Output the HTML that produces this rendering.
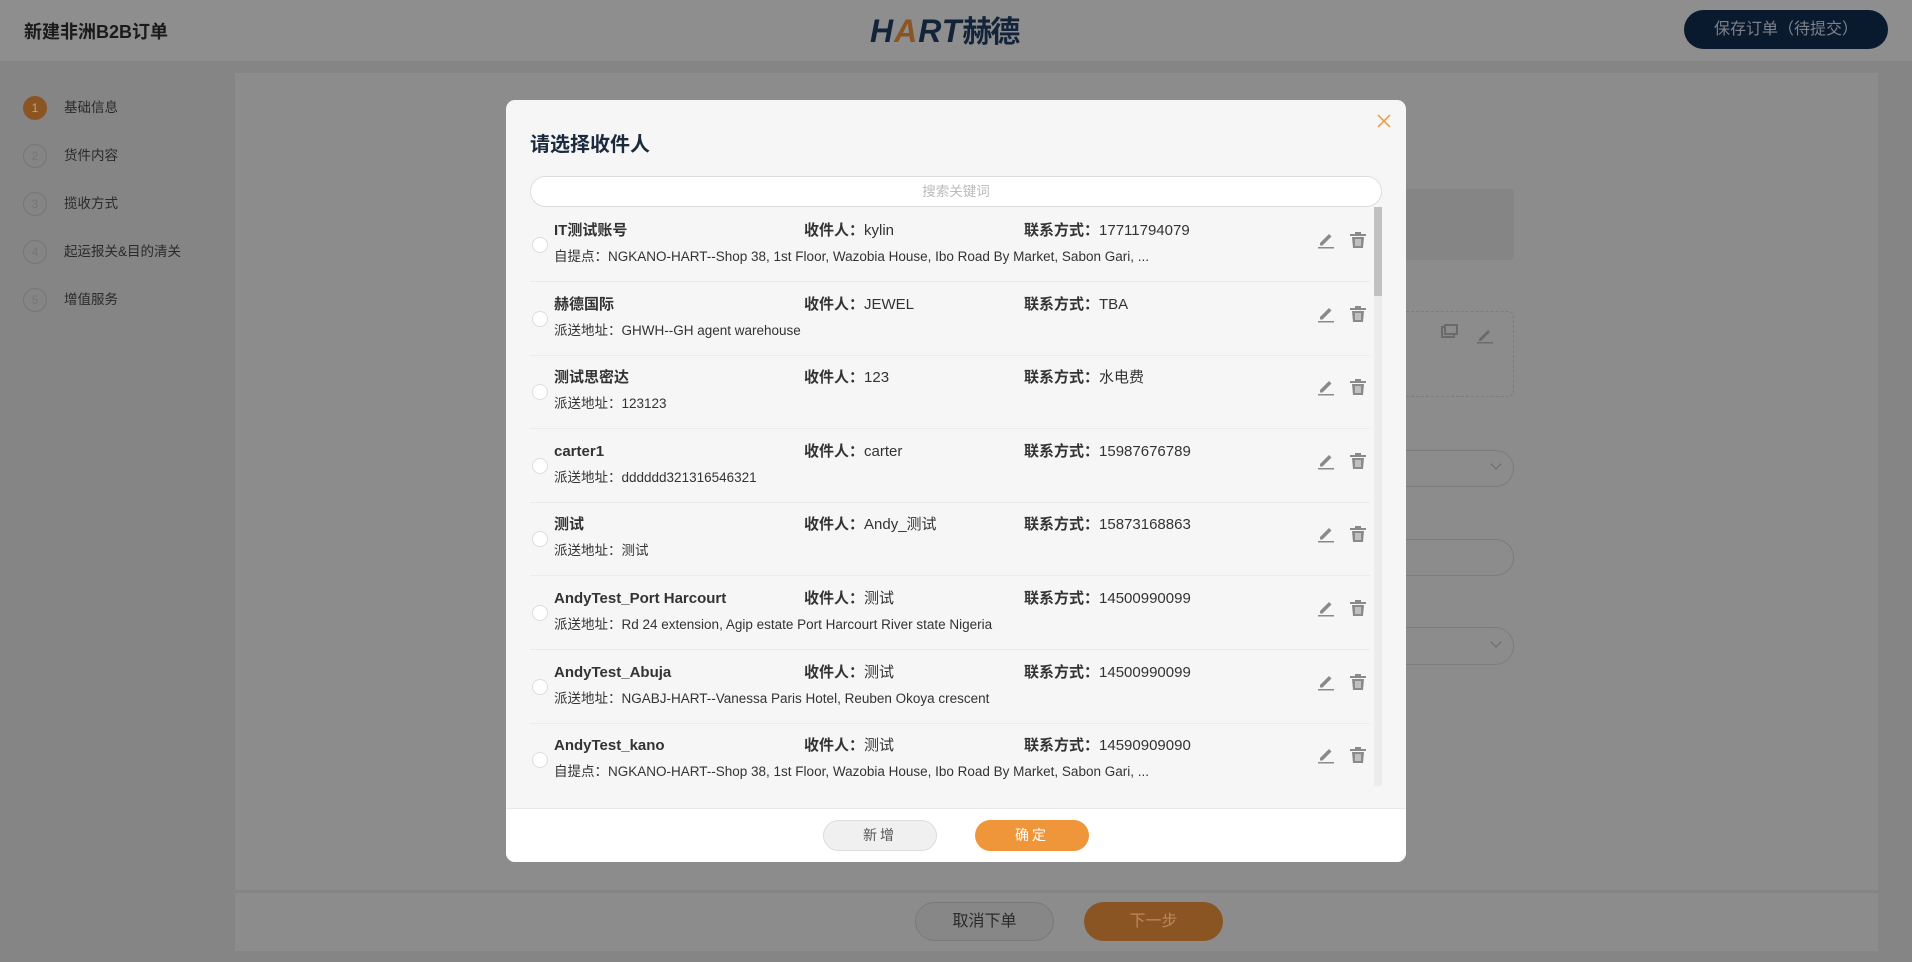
<!DOCTYPE html>
<html><head><meta charset="utf-8"><style>
*{box-sizing:border-box;margin:0;padding:0}
body{width:1912px;height:962px;overflow:hidden;background:#858585;font-family:"Liberation Sans","Noto Sans CJK SC",sans-serif;position:relative;color:#222}
.abs{position:absolute}
.hdr{left:0;top:0;width:1912px;height:61px;background:#8e8e8e}
.panel{left:235px;top:73px;width:1643px;height:878px;background:#8c8c8c}
.step{left:23px;width:24px;height:24px;border-radius:50%;border:1px solid #767676;color:#767676;font-size:12px;text-align:center;line-height:22px}
.stxt{left:64px;font-size:13.5px;color:#2a2a2a;line-height:20px}
.modal{left:506px;top:100px;width:900px;height:762px;background:#f6f6f6;border-radius:9px;overflow:hidden}
.row{position:absolute;left:24px;width:840px;height:74px;border-bottom:1px solid #ebebeb}
.row .n{position:absolute;top:13px;font-size:15px;font-weight:bold;color:#333;line-height:20px;white-space:nowrap}
.row .a{position:absolute;left:24px;top:39px;font-size:13.5px;color:#333;white-space:nowrap;line-height:20px}
.radio{position:absolute;left:2px;top:29px;width:16px;height:16px;border-radius:50%;background:#fff;border:1px solid #ddd}
.ic{position:absolute;top:23px}
.btn{position:absolute;border-radius:20px;text-align:center}
</style></head><body>
<div class="abs hdr"></div>
<div class="abs" style="left:24px;top:18px;font-size:18px;font-weight:bold;color:#1a1a1a">新建非洲B2B订单</div>
<div class="abs" style="left:870px;top:13px;font-size:32px;font-weight:bold;font-style:italic;color:#12233a;letter-spacing:1px;line-height:36px">H<span style="color:#8a5522">A</span>RT<span style="font-style:normal;font-size:30px;letter-spacing:-2px">赫德</span></div>
<div class="btn" style="left:1684px;top:10px;width:204px;height:39px;background:#0a1a2e;color:#7b8089;font-size:16px;line-height:39px">保存订单（待提交）</div>
<div class="abs panel"></div>
<div class="abs step" style="top:96px;background:#8a5522;border-color:#8a5522;color:#c9a27c">1</div><div class="abs stxt" style="top:98px">基础信息</div>
<div class="abs step" style="top:144px">2</div><div class="abs stxt" style="top:146px">货件内容</div>
<div class="abs step" style="top:192px">3</div><div class="abs stxt" style="top:194px">揽收方式</div>
<div class="abs step" style="top:240px">4</div><div class="abs stxt" style="top:242px">起运报关&amp;目的清关</div>
<div class="abs step" style="top:288px">5</div><div class="abs stxt" style="top:290px">增值服务</div>
<div class="abs" style="left:1380px;top:189px;width:134px;height:71px;background:#858585;border-radius:4px"></div>
<div class="abs" style="left:1380px;top:311px;width:134px;height:86px;border:1px dashed #7c7c7c;border-radius:6px"></div>
<div class="abs" style="left:1441px;top:326px;width:14px;height:12px;border:2px solid #6a6a6a"></div>
<div class="abs" style="left:1444px;top:324px;width:14px;height:11px;border:2px solid #6a6a6a;background:#8c8c8c"></div>
<svg class="abs" style="left:1476px;top:326px" width="18" height="18"><path d="M3 13 L12 4 L14 6 L5 15 L3 15Z" fill="#6a6a6a"/><rect x="1" y="16" width="16" height="1.5" fill="#6a6a6a"/></svg>
<div class="abs" style="left:1300px;top:450px;width:214px;height:37px;border:1px solid #7c7c7c;border-radius:19px"></div>
<div class="abs" style="left:1300px;top:539px;width:214px;height:37px;border:1px solid #7c7c7c;border-radius:19px"></div>
<div class="abs" style="left:1300px;top:627px;width:214px;height:38px;border:1px solid #7c7c7c;border-radius:19px"></div>
<div class="abs" style="left:1492px;top:460px;width:8px;height:8px;border-right:1px solid #6a6a6a;border-bottom:1px solid #6a6a6a;transform:rotate(45deg)"></div>
<div class="abs" style="left:1492px;top:638px;width:8px;height:8px;border-right:1px solid #6a6a6a;border-bottom:1px solid #6a6a6a;transform:rotate(45deg)"></div>
<div class="abs" style="left:235px;top:890px;width:1643px;height:3px;background:#858585"></div>
<div class="btn" style="left:915px;top:902px;width:139px;height:39px;border:1px solid #7a7a7a;background:#878787;color:#2a2a2a;font-size:16px;line-height:37px">取消下单</div>
<div class="btn" style="left:1084px;top:902px;width:139px;height:39px;background:#8a5522;color:#b88a5d;font-size:16px;line-height:39px">下一步</div>

<div class="abs modal">
<div class="abs" style="left:24px;top:28px;font-size:20px;font-weight:bold;color:#1c2a3e">请选择收件人</div>
<svg class="abs" style="left:871px;top:14px" width="14" height="14"><path d="M1 1L13 13M13 1L1 13" stroke="#f0963a" stroke-width="1.5"/></svg>
<div class="abs" style="left:24px;top:76px;width:852px;height:31px;border:1px solid #ddd;border-radius:16px;background:#fff;text-align:center;font-size:13.5px;color:#bbb;line-height:29px">搜索关键词</div>
<div class="abs" style="left:868px;top:107px;width:8px;height:679px;background:#ececec"></div>
<div class="abs" style="left:868px;top:107px;width:8px;height:89px;background:#c1c1c1"></div>
<div id="rows"></div>
<div class="abs" style="left:0;top:686px;width:900px;height:22px;background:#f6f6f6"></div>
<div class="abs" style="left:0;top:708px;width:900px;height:54px;background:#fff;border-top:1px solid #e8e8e8"></div>
<div class="btn" style="left:317px;top:720px;width:114px;height:31px;background:#f0f0f0;border:1px solid #ddd;font-size:14px;line-height:29px;color:#555;letter-spacing:3px">新增</div>
<div class="btn" style="left:469px;top:720px;width:114px;height:31px;background:#f0963a;color:#fff;font-size:14px;line-height:31px;letter-spacing:3px">确定</div>
</div>
<script>
var d=[["IT测试账号","kylin","17711794079","自提点：NGKANO-HART--Shop 38, 1st Floor, Wazobia House, Ibo Road By Market, Sabon Gari, ..."],
["赫德国际","JEWEL","TBA","派送地址：GHWH--GH agent warehouse"],
["测试思密达","123","水电费","派送地址：123123"],
["carter1","carter","15987676789","派送地址：dddddd321316546321"],
["测试","Andy_测试","15873168863","派送地址：测试"],
["AndyTest_Port Harcourt","测试","14500990099","派送地址：Rd 24 extension, Agip estate Port Harcourt River state Nigeria"],
["AndyTest_Abuja","测试","14500990099","派送地址：NGABJ-HART--Vanessa Paris Hotel, Reuben Okoya crescent"],
["AndyTest_kano","测试","14590909090","自提点：NGKANO-HART--Shop 38, 1st Floor, Wazobia House, Ibo Road By Market, Sabon Gari, ..."]];
var h="";
d.forEach(function(r,i){var t=108+i*73.6;
h+='<div class="row" style="top:'+t+'px'+(i==7?';border-bottom:none':'')+'"><div class="radio"></div><div class="n" style="left:24px">'+r[0]+'</div><div class="n" style="left:274px">收件人：<span style="font-weight:normal">'+r[1]+'</span></div><div class="n" style="left:494px">联系方式：<span style="font-weight:normal">'+r[2]+'</span></div><div class="a">'+r[3]+'</div>'+
'<svg class="ic" style="left:787px" width="18" height="18"><path d="M3 12 L12 3 L14.5 5.5 L5.5 14.5 L3 14.5Z" fill="#8a8a8a"/><rect x="1" y="16" width="16" height="1.5" fill="#8a8a8a"/></svg>'+
'<svg class="ic" style="left:819px" width="18" height="18"><rect x="1" y="3" width="16" height="2" fill="#8a8a8a"/><rect x="6" y="1" width="6" height="2" fill="#8a8a8a"/><path d="M3 6 H15 L14 17 H4Z" fill="#8a8a8a"/><path d="M7 8V15M9 8V15M11 8V15" stroke="#f6f6f6" stroke-width="1"/></svg></div>';});
document.getElementById("rows").innerHTML=h;
</script>
</body></html>
